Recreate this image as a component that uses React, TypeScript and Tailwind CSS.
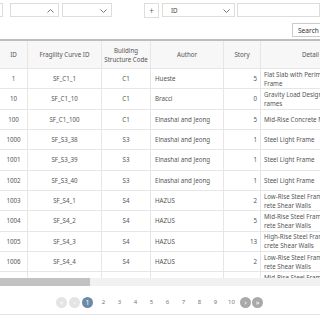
import React from 'react';

type Row = [string, string, string, string, string, string[]];

const rows: Row[] = [
  ['1', 'SF_C1_1', 'C1', 'Hueste', '5', ['Flat Slab with Perimeter', 'Frame']],
  ['10', 'SF_C1_10', 'C1', 'Bracci', '0', ['Gravity Load Designed F', 'rames']],
  ['100', 'SF_C1_100', 'C1', 'Elnashai and Jeong', '5', ['Mid-Rise Concrete Moment Frame']],
  ['1000', 'SF_S3_38', 'S3', 'Elnashai and Jeong', '1', ['Steel Light Frame']],
  ['1001', 'SF_S3_39', 'S3', 'Elnashai and Jeong', '1', ['Steel Light Frame']],
  ['1002', 'SF_S3_40', 'S3', 'Elnashai and Jeong', '1', ['Steel Light Frame']],
  ['1003', 'SF_S4_1', 'S4', 'HAZUS', '2', ['Low-Rise Steel Frame with Conc', 'rete Shear Walls']],
  ['1004', 'SF_S4_2', 'S4', 'HAZUS', '5', ['Mid-Rise Steel Frame with Conc', 'rete Shear Walls']],
  ['1005', 'SF_S4_3', 'S4', 'HAZUS', '13', ['High-Rise Steel Frame with Con', 'crete Shear Walls']],
  ['1006', 'SF_S4_4', 'S4', 'HAZUS', '2', ['Low-Rise Steel Frame with Conc', 'rete Shear Walls']],
  ['1007', 'SF_S4_5', 'S4', 'HAZUS', '5', ['Mid-Rise Steel Frame with Conc', 'rete Shear Walls']],
];

const Chevron = ({ up }: { up?: boolean }) => (
  <svg width="7" height="4" viewBox="0 0 7 4" className="absolute right-[4px] top-[5px]">
    <polyline
      points={up ? '0.5,3.5 3.5,0.5 6.5,3.5' : '0.5,0.5 3.5,3.5 6.5,0.5'}
      fill="none"
      stroke="#777"
      strokeWidth="1"
    />
  </svg>
);

const cols = 'grid grid-cols-[28px_74px_49px_73px_37px_100px] w-[361px]';
const cell = 'border-r border-b border-[#e6e6e6] flex items-center';

const App: React.FC = () => {
  return (
    <div
      className="w-[320px] h-[320px] overflow-hidden bg-white text-[#555] text-[6.2px] leading-[9px]"
      style={{ fontFamily: '"Noto Sans", "Open Sans", sans-serif' }}
    >
      {/* filter bar */}
      <div className="flex h-[14px] mt-[3px]">
        <div className="ml-[-40px] w-[43px] border border-[#ddd]" />
        <div className="relative ml-[7px] w-[49px] border border-[#ddd]">
          <Chevron up />
        </div>
        <div className="relative ml-[3px] w-[50px] border border-[#ddd]">
          <Chevron />
        </div>
        <div className="ml-[32px] w-[15px] h-[15px] border border-[#ddd] flex items-center justify-center text-[8px] text-[#666]">
          +
        </div>
        <div className="relative ml-[3px] w-[73px] border border-[#ddd] pl-[8px] flex items-center text-[#444]">
          ID
          <Chevron />
        </div>
        <div className="ml-[2px] flex-1 border border-[#ddd]" />
      </div>
      <div className="flex pl-[292px] mt-[6px] h-[14px]">
        <div className="w-[40px] shrink-0 border border-[#ccc] pl-[5px] flex items-center text-[#333] text-[6.6px]">Search</div>
      </div>

      {/* table */}
      <div className="mt-[2px] border-t-2 border-[#bdbdbd] h-[239px] overflow-hidden">
        <div className={`${cols} bg-[#f7f7f7] h-[28px] text-center`}>
          <div className={`${cell} justify-center`}>ID</div>
          <div className={`${cell} justify-center`}>Fragility Curve ID</div>
          <div className={`${cell} justify-center`}>
            Building
            <br />
            Structure Code
          </div>
          <div className={`${cell} justify-center`}>Author</div>
          <div className={`${cell} justify-center`}>Story</div>
          <div className={`${cell} justify-center`}>Detail</div>
        </div>
        {rows.map((r) => (
          <div key={r[0]} className={`${cols} h-[20.33px]`}>
            <div className={`${cell} justify-center`}>{r[0]}</div>
            <div className={`${cell} justify-center`}>{r[1]}</div>
            <div className={`${cell} justify-center`}>{r[2]}</div>
            <div className={`${cell} pl-[4px]`}>{r[3]}</div>
            <div className={`${cell} justify-end pr-[3px]`}>{r[4]}</div>
            <div className={`${cell} pl-[3px] whitespace-nowrap overflow-hidden`}>
              <div>
                {r[5].map((l) => (
                  <div key={l}>{l}</div>
                ))}
              </div>
            </div>
          </div>
        ))}
      </div>

      {/* horizontal scrollbar */}
      <div className="h-[8px] bg-[#f1f1f1] flex">
        <div className="w-[90px] bg-[#c2c2c2]" />
      </div>

      {/* pagination */}
      <div className="h-[29px] border-b border-[#e3e3e3] flex items-center pl-[56px] pt-[5px]">
        <div className="w-[11px] h-[11px] rounded-full bg-[#e4e4e4] text-white flex items-center justify-center text-[7px] leading-none">«</div>
        <div className="ml-[2px] w-[11px] h-[11px] rounded-full bg-[#e4e4e4] text-white flex items-center justify-center text-[7px] leading-none">‹</div>
        <div className="ml-[2px] w-[11px] h-[11px] rounded-full bg-[#6c8aa8] text-white flex items-center justify-center text-[7px] leading-none">1</div>
        {['2', '3', '4', '5', '6', '7', '8', '9', '10'].map((n) => (
          <div key={n} className="ml-[5px] w-[11px] h-[11px] flex items-center justify-center text-[6px] text-[#777]">
            {n}
          </div>
        ))}
        <div className="ml-[3px] w-[11px] h-[11px] rounded-full bg-[#a9a9a9] text-white flex items-center justify-center text-[7px] leading-none">›</div>
        <div className="ml-[1px] w-[11px] h-[11px] rounded-full bg-[#a9a9a9] text-white flex items-center justify-center text-[7px] leading-none">»</div>
      </div>
    </div>
  );
};

export default App;
